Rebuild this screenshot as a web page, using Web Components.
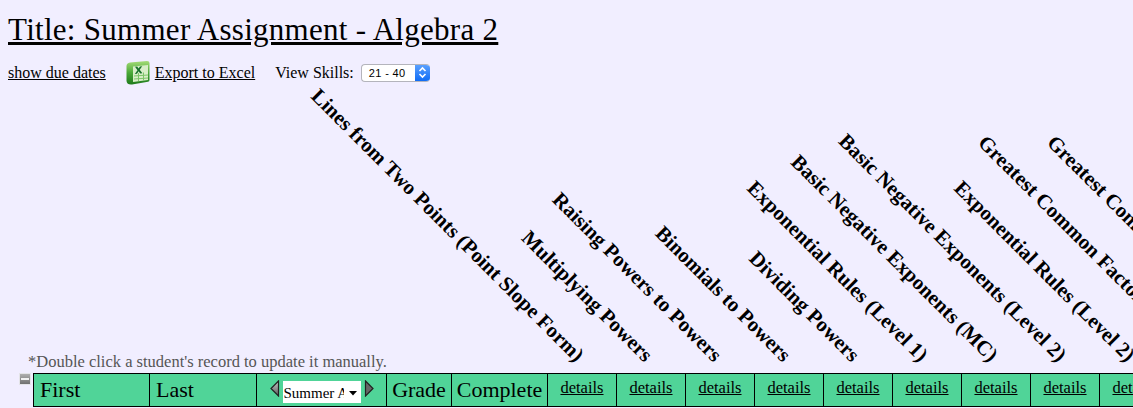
<!DOCTYPE html>
<html>
<head>
<meta charset="utf-8">
<title>Summer Assignment - Algebra 2</title>
<style>
  html, body { margin: 0; height: 100%; overflow: hidden; background: #f1eeff; }
  body { font-family: "Liberation Serif", serif; color: #000; }
</style>
</head>
<body>
<assignment-page></assignment-page>
<script>
var SERIF = '"Liberation Serif", "Times New Roman", serif'

window.customElements.define(
  'excel-icon',
  class extends HTMLElement {
    connectedCallback() {
      var shadowRoot = this.attachShadow({ mode: 'open' })
      shadowRoot.innerHTML = `<style>:host { display: block; width: 24px; height: 25px; } svg { display: block; }</style>
      <svg width="24" height="25" viewBox="0 0 24 25">
        <defs>
          <linearGradient id="g" x1="0" y1="0" x2="0" y2="1">
            <stop offset="0" stop-color="#a5dc78"/><stop offset="0.5" stop-color="#4aa838"/><stop offset="1" stop-color="#1f7a1c"/>
          </linearGradient>
        </defs>
        <path d="M4 2.5 L21 1 Q23.5 1 23.5 3 L23.5 20 Q23.5 21.5 22 21.7 L6 24.5 Q1 25 0.5 21 L0.5 6 Q0.5 3 4 2.5 Z" fill="url(#g)"/>
        <path d="M7 6.5 L22 5 L22 20 L7 22 Z" fill="#d8eec8"/>
        <path d="M8 16 L22 15 M8 19 L22 18 M12.5 13 V21 M17.5 12.5 V20.5" stroke="#7cc468" stroke-width="1" fill="none"/>
        <path d="M9 6.8 L11.2 6.6 L12.6 8.6 L14 6.4 L16.2 6.2 L13.7 9.8 L16.4 13.2 L14.2 13.4 L12.6 11.3 L11 13.7 L8.8 13.9 L11.5 10.2 Z" fill="#16702a"/>
      </svg>`
    }
  }
)

window.customElements.define(
  'skill-select',
  class extends HTMLElement {
    connectedCallback() {
      var shadowRoot = this.attachShadow({ mode: 'open' })
      shadowRoot.innerHTML = `<style>${this.css()}</style>
      <span class="value"><slot></slot></span>
      <span class="stepper">
        <svg width="9" height="13" viewBox="0 0 9 13" fill="none" stroke="#fff" stroke-width="1.6">
          <path d="M1.5 5 L4.5 2 L7.5 5"/><path d="M1.5 8 L4.5 11 L7.5 8"/>
        </svg>
      </span>`
    }

    css() {
      return `
        :host {
          display: inline-flex;
          width: 69px;
          height: 18px;
          box-sizing: border-box;
          border: 1px solid #b4b4bc;
          border-right: none;
          border-radius: 4px;
          background: #fff;
          font-family: "Liberation Sans", sans-serif;
          font-size: 11px;
          overflow: hidden;
        }
        .value { flex: 1; padding-left: 7px; line-height: 17px; letter-spacing: 0.35px; }
        .stepper {
          width: 15px;
          display: flex;
          align-items: center;
          justify-content: center;
          background: linear-gradient(#5aa0ff, #0f6cf5);
        }
      `
    }
  }
)

window.customElements.define(
  'skill-labels',
  class extends HTMLElement {
    connectedCallback() {
      var shadowRoot = this.attachShadow({ mode: 'open' })
      var names = [
        'Lines from Two Points (Point Slope Form)',
        'Multiplying Powers',
        'Raising Powers to Powers',
        'Binomials to Powers',
        'Dividing Powers',
        'Exponential Rules (Level 1)',
        'Basic Negative Exponents (MC)',
        'Basic Negative Exponents (Level 2)',
        'Exponential Rules (Level 2)',
        'Greatest Common Factor (Level 1)',
        'Greatest Common Factor (Level 2)'
      ]
      shadowRoot.innerHTML = `<style>${this.css()}</style>` +
        names.map((name) => `<div class="cell"><span>${name}</span></div>`).join('')
    }

    css() {
      return `
        :host {
          display: flex;
          height: 268px;
          padding-left: 496px;
          width: 900px;
        }
        .cell {
          flex: 0 0 69px;
          min-width: 0;
          display: flex;
          justify-content: flex-end;
          align-items: flex-end;
        }
        span {
          flex-shrink: 0;
          margin-bottom: -12px;
          white-space: nowrap;
          font: bold 20.8px/20px ${SERIF};
          transform-origin: right bottom;
          transform: rotate(45deg);
        }
      `
    }
  }
)

window.customElements.define(
  'term-picker',
  class extends HTMLElement {
    connectedCallback() {
      var shadowRoot = this.attachShadow({ mode: 'open' })
      shadowRoot.innerHTML = `<style>${this.css()}</style>
      <svg width="10" height="17" viewBox="0 0 10 17">
        <defs><linearGradient id="a" x1="0" y1="0" x2="0" y2="1"><stop offset="0" stop-color="#c8c8c8"/><stop offset="1" stop-color="#5a5a5a"/></linearGradient></defs>
        <path d="M8.5 1 L1 8.5 L8.5 16 Z" fill="url(#a)" stroke="#222" stroke-width="1.2"/>
      </svg>
      <div class="box"><span class="text"><slot></slot></span>
        <svg width="8" height="5" viewBox="0 0 8 5"><path d="M0 0 H8 L4 4.5 Z" fill="#000"/></svg>
      </div>
      <svg width="10" height="17" viewBox="0 0 10 17">
        <path d="M1.5 1 L9 8.5 L1.5 16 Z" fill="#666" stroke="#222" stroke-width="1.2"/>
      </svg>`
    }

    css() {
      return `
        :host { display: flex; align-items: flex-start; justify-content: center; gap: 3px; }
        .box {
          width: 78px;
          height: 22px;
          margin-top: 1px;
          background: #fff;
          display: flex;
          align-items: center;
          box-sizing: border-box;
          padding: 2px 4px 0 1px;
          gap: 5px;
          font: 15px ${SERIF};
        }
        .text { width: 60px; overflow: hidden; white-space: nowrap; }
      `
    }
  }
)

window.customElements.define(
  'grade-table',
  class extends HTMLElement {
    connectedCallback() {
      var shadowRoot = this.attachShadow({ mode: 'open' })
      var widths = [116, 107, 130, 65, 96]
      for (var i = 0; i < 11; i++) widths.push(69)
      var details = ''
      for (var j = 0; j < 11; j++) details += '<th class="skill"><a>details</a></th>'
      shadowRoot.innerHTML = `<style>${this.css()}</style>
      <table>
        <colgroup>${widths.map((w) => `<col style="width:${w}px">`).join('')}</colgroup>
        <tr>
          <th class="name">First</th>
          <th class="name">Last</th>
          <th class="term"><term-picker>Summer Assignment</term-picker></th>
          <th>Grade</th>
          <th>Complete</th>
          ${details}
        </tr>
      </table>`
    }

    css() {
      return `
        :host { display: block; flex: none; }
        table {
          border-collapse: collapse;
          table-layout: fixed;
          width: 1173px;
          background: #50d498;
        }
        th {
          height: 33px;
          padding: 0;
          box-sizing: border-box;
          border: 1px solid #000;
          font: normal 22px ${SERIF};
          text-align: center;
          overflow: hidden;
          white-space: nowrap;
        }
        .name { text-align: left; padding-left: 6px; }
        .term { padding-top: 6px; vertical-align: top; }
        .skill { vertical-align: top; padding-top: 4px; font-size: 16.5px; }
        a { text-decoration: underline; }
      `
    }
  }
)

window.customElements.define(
  'assignment-page',
  class extends HTMLElement {
    connectedCallback() {
      var shadowRoot = this.attachShadow({ mode: 'open' })
      shadowRoot.innerHTML = `<style>${this.css()}</style>
      <h1>Title: Summer Assignment - Algebra 2</h1>
      <div class="toolbar">
        <a>show due dates</a>
        <div class="export"><excel-icon></excel-icon><a>Export to Excel</a></div>
        <div class="view"><span>View Skills:</span><skill-select>21 - 40</skill-select></div>
      </div>
      <skill-labels></skill-labels>
      <div class="note">*Double click a student's record to update it manually.</div>
      <div class="grid-row">
        <div class="collapse"><i></i></div>
        <grade-table></grade-table>
      </div>`
    }

    css() {
      return `
        :host { display: block; padding: 13px 0 0 8px; font-family: ${SERIF}; }
        h1 {
          margin: 0;
          font: normal 31px/34px ${SERIF};
          text-decoration: underline;
          letter-spacing: 0.28px;
        }
        .toolbar {
          display: flex;
          align-items: center;
          height: 25px;
          margin-top: 13px;
          font-size: 16px;
        }
        a { text-decoration: underline; }
        .export { display: flex; align-items: center; gap: 5px; margin-left: 20px; }
        .view { display: flex; align-items: center; gap: 7px; margin-left: 20px; }
        .note {
          margin-left: 20px;
          height: 17px;
          font-size: 16.5px;
          line-height: 17px;
          color: #555;
          white-space: nowrap;
        }
        .grid-row { display: flex; align-items: flex-start; width: 1300px; margin-top: 3px; }
        .collapse {
          flex: none;
          width: 12px;
          height: 12px;
          margin: 0 2px 0 11px;
          box-sizing: border-box;
          border: 1px solid #e4e4e8;
          background: linear-gradient(#b0b0b0, #707070);
          display: flex;
          align-items: center;
          justify-content: center;
        }
        .collapse i { display: block; width: 8px; height: 2px; background: #f2f2f2; }
      `
    }
  }
)
</script>
</body>
</html>
